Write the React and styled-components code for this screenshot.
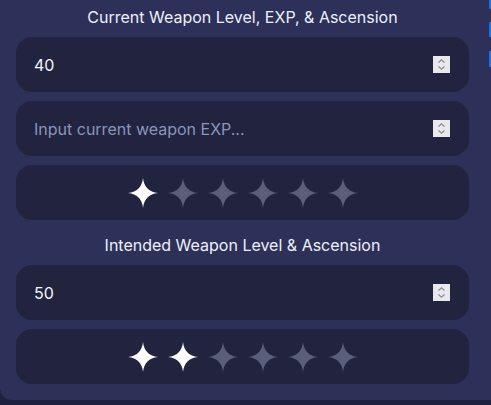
import React from "react";
import styled, { createGlobalStyle } from "styled-components";

const GlobalStyle = createGlobalStyle`
  html, body {
    margin: 0;
    padding: 0;
    background-color: #1f2140;
    font-family: "Inter", "Liberation Sans", sans-serif;
  }
`;

const Page = styled.div`
  position: relative;
  width: 491px;
  height: 405px;
  overflow: hidden;
`;

const Panel = styled.div`
  width: 491px;
  height: 400px;
  box-sizing: border-box;
  padding: 0 22px 16px 16px;
  background-color: #2d3159;
  border-bottom-left-radius: 12px;
  display: flex;
  flex-direction: column;
`;

const Title = styled.div`
  flex-shrink: 0;
  margin: ${(p) => (p.first ? "7px 0 10px" : "6px 0 10px")};
  height: 20px;
  line-height: 20px;
  text-align: center;
  font-size: 16px;
  color: #eef0f8;
`;

const Box = styled.div`
  flex-shrink: 0;
  height: 55px;
  margin-bottom: ${(p) => (p.last ? "0" : "9px")};
  border-radius: 16px;
  background-color: #21233f;
  display: flex;
  align-items: center;
  box-sizing: border-box;
  padding: 0 19px 0 18px;
`;

const Field = styled.input`
  flex: 1;
  min-width: 0;
  border: none;
  outline: none;
  background: transparent;
  font-family: "Inter", "Liberation Sans", sans-serif;
  font-size: 16px;
  color: #f4f5fa;
  padding: 0;

  &::placeholder {
    color: #8a95bd;
  }
`;

const Spinner = styled.div`
  width: 17px;
  height: 17px;
  background-color: #e9e9ed;
  display: flex;
  align-items: center;
  justify-content: center;
`;

const Stars = styled(Box)`
  justify-content: center;
  gap: 10px;
  padding: 0;
`;

const Flag = styled.div`
  position: absolute;
  right: 0;
  width: 2px;
  background-color: #1a6fe0;
`;

function SpinIcon() {
  return (
    <Spinner>
      <svg width="11" height="13" viewBox="0 0 11 13" fill="none">
        <path d="M2.5 4.5 L5.5 1.8 L8.5 4.5" stroke="#8b8b93" strokeWidth="1.3" />
        <path d="M2.5 8.5 L5.5 11.2 L8.5 8.5" stroke="#8b8b93" strokeWidth="1.3" />
      </svg>
    </Spinner>
  );
}

function Star({ on }) {
  return (
    <svg width="30" height="30" viewBox="0 0 30 30">
      <path
        d="M15 0 C16 9 21 14 30 15 C21 16 16 21 15 30 C14 21 9 16 0 15 C9 14 14 9 15 0 Z"
        fill={on ? "#ffffff" : "#5b5e7a"}
      />
    </svg>
  );
}

function StarRow({ count, last }) {
  return (
    <Stars last={last}>
      {[0, 1, 2, 3, 4, 5].map((i) => (
        <Star key={i} on={i < count} />
      ))}
    </Stars>
  );
}

export default function App() {
  return (
    <Page>
      <GlobalStyle />
      <Panel>
        <Title first>Current Weapon Level, EXP, &amp; Ascension</Title>
        <Box>
          <Field type="text" defaultValue="40" />
          <SpinIcon />
        </Box>
        <Box>
          <Field type="text" placeholder="Input current weapon EXP..." />
          <SpinIcon />
        </Box>
        <StarRow count={1} />
        <Title>Intended Weapon Level &amp; Ascension</Title>
        <Box>
          <Field type="text" defaultValue="50" />
          <SpinIcon />
        </Box>
        <StarRow count={2} last />
      </Panel>
      <Flag style={{ top: 0, height: 9 }} />
      <Flag style={{ top: 22, height: 15 }} />
      <Flag style={{ top: 51, height: 16 }} />
    </Page>
  );
}
